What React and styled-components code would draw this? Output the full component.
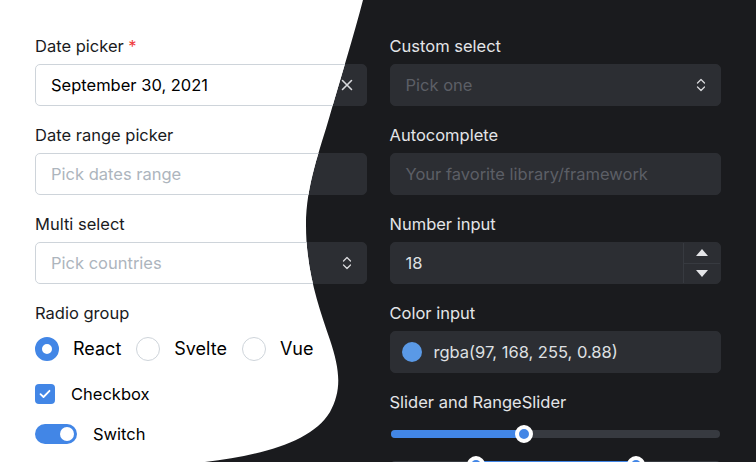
import React from 'react';
import styled, { createGlobalStyle } from 'styled-components';

const BLUE = '#4286e6';

const GlobalStyle = createGlobalStyle`
  body {
    margin: 0;
    background: #1a1b1e;
    font-family: Inter, "Noto Sans", "Liberation Sans", sans-serif;
  }
`;

// the white blob that shows the light theme
const BLOB = "path('M0 0 H363 C354 35 340 80 330 115 C320 150 306 185 306 225 C306 270 318 305 330 340 C340 370 342 390 330 412 C312 442 262 455 205 462 L0 462 Z')";

const App = () => (
  <>
    <GlobalStyle />
    <Stage>
      <Grid>
        <LeftColumn dark />
        <RightColumn />
      </Grid>
      <LightLayer>
        <Grid>
          <LeftColumn />
          <div />
        </Grid>
      </LightLayer>
    </Stage>
  </>
);

const LeftColumn = ({ dark }) => (
  <Column>
    <Field>
      <Label $dark={dark}>
        Date picker <Star>*</Star>
      </Label>
      <InputBox $dark={dark}>
        <Value $dark={dark}>September 30, 2021</Value>
        <Icon $dark={dark}>
          <svg width="14" height="14" viewBox="0 0 14 14">
            <path d="M2.5 2.5 L11.5 11.5 M11.5 2.5 L2.5 11.5" stroke="currentColor" strokeWidth="1.6" strokeLinecap="round" />
          </svg>
        </Icon>
      </InputBox>
    </Field>
    <Field>
      <Label $dark={dark}>Date range picker</Label>
      <InputBox $dark={dark}>
        <Placeholder $dark={dark}>Pick dates range</Placeholder>
      </InputBox>
    </Field>
    <Field>
      <Label $dark={dark}>Multi select</Label>
      <InputBox $dark={dark}>
        <Placeholder $dark={dark}>Pick countries</Placeholder>
        <Icon $dark={dark}>
          <Selector />
        </Icon>
      </InputBox>
    </Field>
    <GroupLabel $dark={dark}>Radio group</GroupLabel>
    <RadioRow>
      {['React', 'Svelte', 'Vue'].map((name, i) => (
        <RadioItem key={name}>
          <RadioDot $checked={i === 0} $dark={dark} />
          <RadioText $dark={dark}>{name}</RadioText>
        </RadioItem>
      ))}
    </RadioRow>
    <ToggleRow $top={23}>
      <CheckBox>
        <svg width="12" height="10" viewBox="0 0 12 10">
          <path d="M1.5 5.2 L4.5 8 L10.5 1.8" fill="none" stroke="#fff" strokeWidth="1.8" strokeLinecap="round" strokeLinejoin="round" />
        </svg>
      </CheckBox>
      <ToggleText $dark={dark}>Checkbox</ToggleText>
    </ToggleRow>
    <ToggleRow $top={20}>
      <SwitchTrack>
        <SwitchThumb />
      </SwitchTrack>
      <ToggleText $dark={dark}>Switch</ToggleText>
    </ToggleRow>
  </Column>
);

const RightColumn = () => (
  <Column>
    <Field>
      <Label $dark>Custom select</Label>
      <InputBox $dark>
        <Placeholder $dark>Pick one</Placeholder>
        <Icon $dark>
          <Selector />
        </Icon>
      </InputBox>
    </Field>
    <Field>
      <Label $dark>Autocomplete</Label>
      <InputBox $dark>
        <Placeholder $dark>Your favorite library/framework</Placeholder>
      </InputBox>
    </Field>
    <Field>
      <Label $dark>Number input</Label>
      <InputBox $dark $noRight>
        <Value $dark>18</Value>
        <Steppers>
          <Stepper>
            <svg width="12" height="7" viewBox="0 0 12 7"><path d="M0 7 L6 0 L12 7 Z" fill="#e4e5e8" /></svg>
          </Stepper>
          <Stepper $bottom>
            <svg width="12" height="7" viewBox="0 0 12 7"><path d="M0 0 L12 0 L6 7 Z" fill="#e4e5e8" /></svg>
          </Stepper>
        </Steppers>
      </InputBox>
    </Field>
    <Field>
      <Label $dark>Color input</Label>
      <InputBox $dark>
        <Swatch $color="rgba(97, 168, 255, 0.88)" />
        <Value $dark>rgba(97, 168, 255, 0.88)</Value>
      </InputBox>
    </Field>
    <Label $dark>Slider and RangeSlider</Label>
    <SliderWrap $top={5}>
      <Track>
        <Fill style={{ left: 0, width: '40.5%' }} />
        <Thumb style={{ left: '40.5%' }} />
      </Track>
    </SliderWrap>
    <SliderWrap $top={13}>
      <Track>
        <Fill style={{ left: '26%', width: '48.5%' }} />
        <Thumb style={{ left: '26%' }} />
        <Thumb style={{ left: '74.5%' }} />
      </Track>
    </SliderWrap>
  </Column>
);

const Selector = () => (
  <svg width="10" height="16" viewBox="0 0 10 16">
    <path d="M1.5 6 L5 2.5 L8.5 6 M1.5 10 L5 13.5 L8.5 10" fill="none" stroke="currentColor" strokeWidth="1.3" strokeLinecap="round" strokeLinejoin="round" />
  </svg>
);

const Stage = styled.div`
  position: relative;
  width: 756px;
  height: 462px;
  overflow: hidden;
  background: #1a1b1e;
`;

const LightLayer = styled.div`
  position: absolute;
  inset: 0;
  background: #ffffff;
  clip-path: ${BLOB};
`;

const Grid = styled.div`
  display: grid;
  grid-template-columns: 1fr 1fr;
  column-gap: 23px;
  padding: 37px 35px 0;
`;

const Column = styled.div`
  display: flex;
  flex-direction: column;
`;

const Field = styled.div`
  display: flex;
  flex-direction: column;
  margin-bottom: 20px;
`;

const Label = styled.label`
  font-size: 16.5px;
  line-height: 19px;
  font-weight: 400;
  color: ${p => (p.$dark ? '#e4e5e8' : '#1a1b1e')};
  margin-bottom: 8px;
`;

const GroupLabel = styled(Label)`
  margin-bottom: 14px;
`;

const Star = styled.span`
  color: #f03e3e;
`;

const InputBox = styled.div`
  display: flex;
  align-items: center;
  gap: 12px;
  height: 42px;
  box-sizing: border-box;
  padding: ${p => (p.$noRight ? '0 0 0 15px' : '0 12px 0 15px')};
  border-radius: 5px;
  border: 1px solid ${p => (p.$dark ? '#2c2e33' : '#ced4da')};
  background: ${p => (p.$dark ? '#2c2e33' : '#ffffff')};
  overflow: hidden;
`;

const Value = styled.span`
  flex: 1;
  font-size: 16.5px;
  color: ${p => (p.$dark ? '#dfe0e3' : '#000000')};
`;

const Placeholder = styled.span`
  flex: 1;
  font-size: 16.5px;
  color: ${p => (p.$dark ? '#5c5f66' : '#adb5bd')};
`;

const Icon = styled.span`
  display: flex;
  align-items: center;
  justify-content: center;
  width: 14px;
  color: ${p => (p.$dark ? '#d8d9dc' : '#868e96')};
`;

const Steppers = styled.div`
  display: flex;
  flex-direction: column;
  width: 36px;
  height: 100%;
  border-left: 1px solid #373a40;
`;

const Stepper = styled.div`
  flex: 1;
  display: flex;
  align-items: center;
  justify-content: center;
  border-top: ${p => (p.$bottom ? '1px solid #373a40' : 'none')};
`;

const Swatch = styled.span`
  width: 20px;
  height: 20px;
  border-radius: 50%;
  background: ${p => p.$color};
  margin-left: -4px;
`;

const RadioRow = styled.div`
  display: flex;
  gap: 15px;
`;

const RadioItem = styled.div`
  display: flex;
  align-items: center;
  gap: 14px;
`;

const RadioDot = styled.span`
  width: 24px;
  height: 24px;
  box-sizing: border-box;
  border-radius: 50%;
  border: ${p => (p.$checked ? `7px solid ${BLUE}` : `1px solid ${p.$dark ? '#373a40' : '#ced4da'}`)};
  background: ${p => (p.$checked ? '#ffffff' : p.$dark ? '#25262b' : '#ffffff')};
`;

const RadioText = styled.span`
  font-size: 18px;
  line-height: 24px;
  color: ${p => (p.$dark ? '#dfe0e3' : '#000000')};
`;

const ToggleRow = styled.div`
  display: flex;
  align-items: center;
  gap: 16px;
  margin-top: ${p => p.$top}px;
`;

const CheckBox = styled.span`
  width: 20px;
  height: 20px;
  border-radius: 4px;
  background: ${BLUE};
  display: flex;
  align-items: center;
  justify-content: center;
`;

const ToggleText = styled.span`
  font-size: 16.5px;
  line-height: 20px;
  color: ${p => (p.$dark ? '#dfe0e3' : '#000000')};
`;

const SwitchTrack = styled.span`
  width: 42px;
  height: 20px;
  border-radius: 10px;
  background: ${BLUE};
  display: flex;
  align-items: center;
  justify-content: flex-end;
  padding: 0 3px;
  box-sizing: border-box;
`;

const SwitchThumb = styled.span`
  width: 14px;
  height: 14px;
  border-radius: 50%;
  background: #ffffff;
`;

const SliderWrap = styled.div`
  height: 18px;
  display: flex;
  align-items: center;
  margin-top: ${p => p.$top}px;
  padding: 0 1px;
`;

const Track = styled.div`
  position: relative;
  flex: 1;
  height: 8px;
  border-radius: 4px;
  background: #373a40;
`;

const Fill = styled.div`
  position: absolute;
  top: 0;
  bottom: 0;
  border-radius: 4px;
  background: ${BLUE};
`;

const Thumb = styled.div`
  position: absolute;
  top: 50%;
  width: 18px;
  height: 18px;
  box-sizing: border-box;
  border-radius: 50%;
  border: 4px solid #ffffff;
  background: ${BLUE};
  transform: translate(-50%, -50%);
`;

export default App;
